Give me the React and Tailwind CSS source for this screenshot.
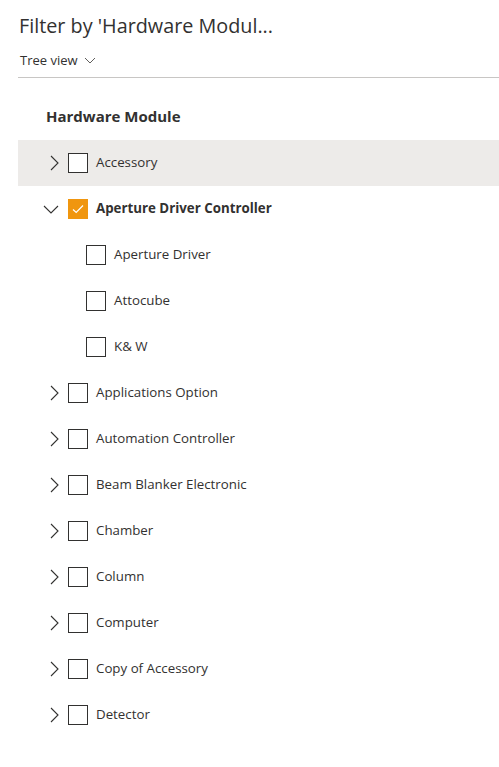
import React from "react";

const items = [
  { label: "Accessory", level: 0, hover: true },
  { label: "Aperture Driver Controller", level: 0, open: true, checked: true },
  { label: "Aperture Driver", level: 1 },
  { label: "Attocube", level: 1 },
  { label: "K& W", level: 1 },
  { label: "Applications Option", level: 0 },
  { label: "Automation Controller", level: 0 },
  { label: "Beam Blanker Electronic", level: 0 },
  { label: "Chamber", level: 0 },
  { label: "Column", level: 0 },
  { label: "Computer", level: 0 },
  { label: "Copy of Accessory", level: 0 },
  { label: "Detector", level: 0 },
];

function Chevron({ open }) {
  if (open) {
    return (
      <svg width="16" height="9" viewBox="0 0 16 9" className="shrink-0">
        <path d="M1 1 L8 8 L15 1" fill="none" stroke="#323130" strokeWidth="1.1" />
      </svg>
    );
  }
  return (
    <svg width="9" height="16" viewBox="0 0 9 16" className="shrink-0">
      <path d="M1 1 L8 8 L1 15" fill="none" stroke="#323130" strokeWidth="1.1" />
    </svg>
  );
}

function Checkbox({ checked }) {
  if (checked) {
    return (
      <div className="w-5 h-5 shrink-0 bg-[#f0960f] flex items-center justify-center">
        <svg width="12" height="10" viewBox="0 0 12 10">
          <path d="M1 5.5 L4.2 8.5 L11 1.5" fill="none" stroke="#ffffff" strokeWidth="1.2" />
        </svg>
      </div>
    );
  }
  return <div className="w-5 h-5 shrink-0 border border-[#323130] bg-white" />;
}

function TreeRow({ item }) {
  return (
    <div
      className={`h-[46px] flex items-center ${item.hover ? "bg-[#edebe9]" : ""}`}
    >
      {item.level === 0 ? (
        <div className="w-[50px] flex justify-end items-center pr-[9px]">
          <Chevron open={item.open} />
        </div>
      ) : (
        <div className="w-[68px]" />
      )}
      <Checkbox checked={item.checked} />
      <span
        className={`ml-2 -mt-px text-[13.3px] text-[#323130] whitespace-nowrap ${
          item.checked ? "font-bold" : ""
        }`}
      >
        {item.label}
      </span>
    </div>
  );
}

export default function App() {
  return (
    <div
      className="w-[499px] h-[767px] bg-white overflow-hidden"
      style={{ fontFamily: '"Open Sans", "Noto Sans", sans-serif' }}
    >
      {/* Header */}
      <div className="pl-[19px] pt-[8px] h-[44px] flex items-center">
        <h1 className="text-[19.8px] text-[#323130] leading-none whitespace-nowrap">
          Filter by 'Hardware Modul...
        </h1>
      </div>

      <div className="ml-[18px] border-b border-[#c8c6c4] h-[34px] flex items-center">
        <button className="flex items-center gap-[6px] pl-[2px] text-[13px] text-[#323130]">
          Tree view
          <svg width="12" height="7" viewBox="0 0 12 7">
            <path d="M1 1 L6 6 L11 1" fill="none" stroke="#605e5c" strokeWidth="1" />
          </svg>
        </button>
      </div>

      {/* Tree */}
      <div className="ml-[18px]">
        <div className="h-[62px] flex items-end pb-[13px] pl-[28px]">
          <span className="text-[15px] font-bold text-[#323130]">Hardware Module</span>
        </div>
        {items.map((item) => (
          <TreeRow key={item.label} item={item} />
        ))}
      </div>
    </div>
  );
}
